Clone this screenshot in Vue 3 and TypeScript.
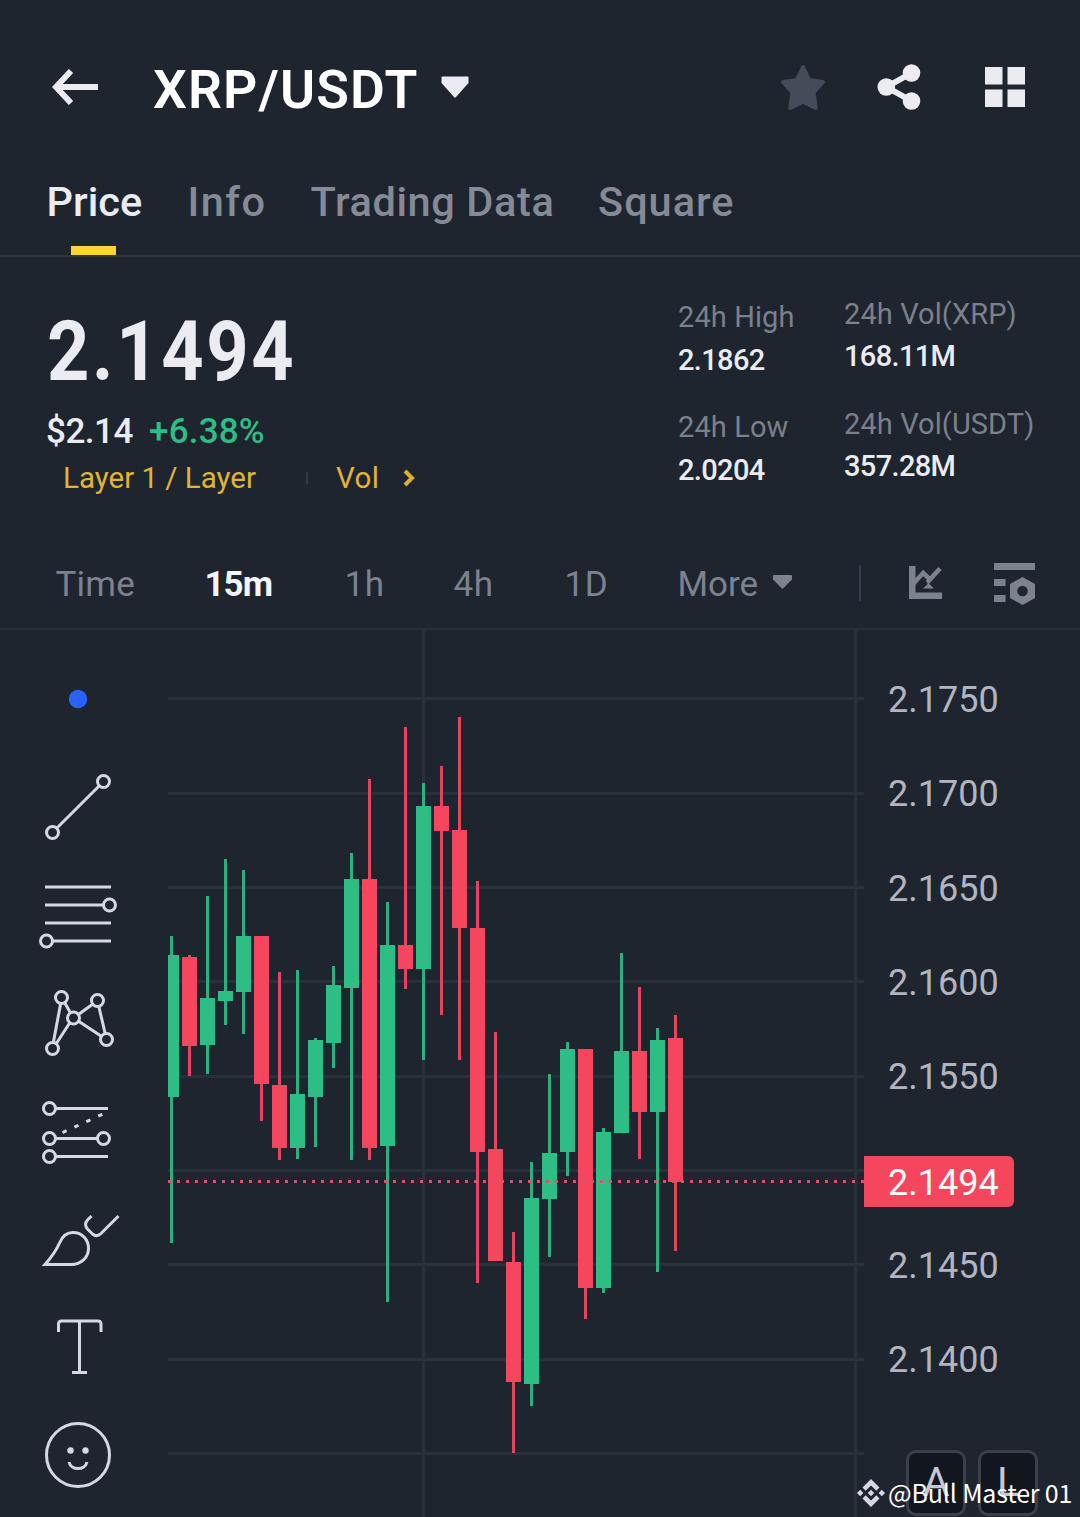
<script setup lang="ts">
interface Tab { label: string; width: number; spacing: number; active?: boolean }
interface Stat { label: string; value: string }
interface Interval { label: string; width: number; spacing: number; active?: boolean }
type Candle = [high: number, top: number, bottom: number, low: number, up: 0 | 1]

const tabs: Tab[] = [
  { label: 'Price', width: 141, spacing: 0, active: true },
  { label: 'Info', width: 123, spacing: 1.5 },
  { label: 'Trading Data', width: 287.5, spacing: 0.6 },
  { label: 'Square', width: 150, spacing: 1 },
]

const rangeStats: Stat[] = [
  { label: '24h High', value: '2.1862' },
  { label: '24h Low', value: '2.0204' },
]
const volumeStats: Stat[] = [
  { label: '24h Vol(XRP)', value: '168.11M' },
  { label: '24h Vol(USDT)', value: '357.28M' },
]

const intervals: Interval[] = [
  { label: 'Time', width: 149, spacing: 0.2 },
  { label: '15m', width: 140, spacing: -1, active: true },
  { label: '1h', width: 109, spacing: 0.6 },
  { label: '4h', width: 111, spacing: 0.6 },
  { label: '1D', width: 113, spacing: 0.6 },
  { label: 'More', width: 96, spacing: 0 },
]

const axisLabels: string[] = ['2.1750', '2.1700', '2.1650', '2.1600', '2.1550', '', '2.1450', '2.1400']

// Plot coordinates: the SVG view box starts at x 168, y 630.
const gridLines: number[] = [698.5, 793.5, 887.5, 981.5, 1076.5, 1170.5, 1264.5, 1359.5, 1453.5]
const candles: Candle[] = [
  [936, 955, 1097, 1243, 1], [955, 957, 1046, 1076, 0], [896, 998, 1045, 1074, 1],
  [859, 991, 1001, 1025, 1], [870, 936, 992, 1034, 1], [936, 936, 1084, 1121, 0],
  [972, 1085, 1148, 1160, 0], [970, 1094, 1148, 1159, 1], [1038, 1040, 1097, 1147, 1],
  [966, 985, 1043, 1068, 1], [853, 879, 988, 1160, 1], [779, 879, 1148, 1160, 0],
  [902, 945, 1146, 1302, 1], [727, 945, 969, 989, 0], [783, 806, 969, 1060, 1],
  [766, 806, 831, 1015, 0], [717, 830, 928, 1060, 0], [881, 928, 1152, 1283, 0],
  [1032, 1149, 1261, 1261, 0], [1232, 1262, 1382, 1453, 0], [1162, 1198, 1384, 1406, 1],
  [1074, 1153, 1199, 1257, 1], [1042, 1049, 1152, 1176, 1], [1049, 1049, 1288, 1319, 0],
  [1128, 1132, 1288, 1293, 1], [953, 1051, 1133, 1133, 1], [987, 1051, 1112, 1159, 0],
  [1028, 1040, 1112, 1272, 1], [1015, 1038, 1182, 1251, 0],
]
const centerX = (i: number): number => 171.5 + i * 18
</script>

<template>
  <main class="screen">
    <header class="topbar">
      <svg class="back" width="46" height="36" viewBox="0 0 46 36">
        <path d="M46 18H6M19 2L4 18L19 34" fill="none" stroke="#eaecf2" stroke-width="6" />
      </svg>
      <h1 class="pair">XRP/USDT</h1>
      <svg class="caret" width="28" height="22" viewBox="0 0 28 22">
        <path d="M0.5 1.5Q0.5 0.5 1.5 0.5H26.5Q27.5 0.5 27.5 1.5V7L15 21Q14 22 13 21L0.5 7Z" fill="#eaecf2" />
      </svg>
      <svg class="star" width="46" height="48" viewBox="0 0 46 48">
        <path d="M23 3L29.2 16L43 18L33.5 28.5L35.8 44L23 37.8L10.2 44L12.5 28.5L3 18L16.8 16Z" fill="#464b59" stroke="#464b59" stroke-width="4" stroke-linejoin="round" />
      </svg>
      <svg class="share" width="44" height="46" viewBox="0 0 44 46">
        <path d="M34.5 9L9.5 23L34.5 37" fill="none" stroke="#eaecf2" stroke-width="6" />
        <circle cx="34.5" cy="9" r="8.8" fill="#eaecf2" />
        <circle cx="9.3" cy="23" r="8.8" fill="#eaecf2" />
        <circle cx="34.5" cy="37" r="8.8" fill="#eaecf2" />
      </svg>
      <svg width="40" height="40" viewBox="0 0 40 40">
        <path d="M0 0H17.5V17.5H0ZM22.5 0H40V17.5H22.5ZM0 22.5H17.5V40H0ZM22.5 22.5H40V40H22.5Z" fill="#eaecf2" />
      </svg>
    </header>

    <nav class="tabs">
      <span
        v-for="tab in tabs"
        :key="tab.label"
        class="tab"
        :class="{ active: tab.active }"
        :style="{ width: tab.width + 'px', letterSpacing: tab.spacing + 'px' }"
      >{{ tab.label }}</span>
    </nav>

    <section class="summary">
      <div class="quote">
        <div class="price">2.1494</div>
        <div class="fiat"><span class="usd">$2.14</span><span class="change">+6.38%</span></div>
        <div class="tags">
          <span class="tag-name">Layer 1 / Layer</span>
          <i class="tag-sep"></i>
          <span class="tag-vol">Vol</span>
          <svg width="12" height="18" viewBox="0 0 12 18">
            <path d="M2 2L9 9L2 16" fill="none" stroke="#dcb02f" stroke-width="4" />
          </svg>
        </div>
      </div>
      <dl class="stats">
        <div v-for="s in rangeStats" :key="s.label" class="stat"><dt>{{ s.label }}</dt><dd>{{ s.value }}</dd></div>
      </dl>
      <dl class="stats volume">
        <div v-for="s in volumeStats" :key="s.label" class="stat"><dt>{{ s.label }}</dt><dd>{{ s.value }}</dd></div>
      </dl>
    </section>

    <nav class="intervals">
      <span
        v-for="item in intervals"
        :key="item.label"
        class="interval"
        :class="{ active: item.active }"
        :style="{ width: item.width + 'px', letterSpacing: item.spacing + 'px' }"
      >{{ item.label }}</span>
      <svg class="more-caret" width="19" height="14" viewBox="0 0 19 14">
        <path d="M0 1Q0 0 1 0H18Q19 0 19 1V4.5L10.3 13.3Q9.5 14 8.7 13.3L0 4.5Z" fill="#7d828f" />
      </svg>
      <i class="divider"></i>
      <svg class="indicator" width="33" height="34" viewBox="0 0 33 34">
        <path d="M0 1H6.5V27.5H33V34H0Z" fill="#7d828f" />
        <path d="M4 19L14.2 8L21 14.5L31 3.5" fill="none" stroke="#7d828f" stroke-width="4.5" />
        <path d="M19.5 18.2L14 23.5H25Z" fill="#7d828f" />
        <path d="M19.5 20L16.8 15.5L20.5 12L22.4 15.5Z" fill="#7d828f" />
      </svg>
      <svg width="42" height="44" viewBox="0 0 42 44">
        <path d="M0 1H41V8H0ZM0 17H11.5V24H0ZM0 33H11.5V40H0Z" fill="#7d828f" />
        <path fill-rule="evenodd" d="M28.5 15L41 22V36L28.5 43L16 36V22ZM28.5 23.7A5.3 5.3 0 1 0 28.5 34.3A5.3 5.3 0 1 0 28.5 23.7Z" fill="#7d828f" />
      </svg>
    </nav>

    <section class="chart">
      <aside class="tools">
        <svg viewBox="-42 -42 84 84"><circle r="9.2" class="dot" /></svg>
        <svg viewBox="-42 -42 84 84">
          <path d="M-21.3 21.3L21.3 -21.3" /><circle cx="25.5" cy="-25.5" r="6" /><circle cx="-25.5" cy="25.5" r="6" />
        </svg>
        <svg viewBox="-42 -42 84 84">
          <path d="M-33 -27H33M-33 -9H25.5M-33 9H33M-25.5 27H33" />
          <circle cx="31.5" cy="-9" r="6" /><circle cx="-31.5" cy="27" r="6" />
        </svg>
        <svg viewBox="-42 -42 84 84">
          <path d="M-24.7 19.6L-17.3 -19.6M-13.4 -20.4L-7.6 -10.2M0.4 -8.5L14.6 -18.8M20.8 -16.7L27.2 10.7M0.6 -1.7L23.4 13.3M-8.2 -0.2L-21.8 20.7" />
          <circle cx="-16.5" cy="-25.5" r="6" /><circle cx="19.5" cy="-22.5" r="6" /><circle cx="-4.5" cy="-5" r="6" />
          <circle cx="28.5" cy="16.5" r="6" /><circle cx="-25.5" cy="25.5" r="6" />
        </svg>
        <svg viewBox="-42 -42 84 84">
          <path d="M-22.5 -22.5H30M-22.5 7.5H19.5M-22.5 25.5H30" />
          <path d="M-15.5 1.6L25 -17" stroke-dasharray="4.5 8.6" />
          <circle cx="-28.5" cy="-22.5" r="6" /><circle cx="-28.5" cy="7.5" r="6" /><circle cx="-28.5" cy="25.5" r="6" /><circle cx="25.5" cy="7.5" r="6" />
        </svg>
        <svg viewBox="-42 -42 84 84">
          <path d="M-33 25.5C-26 17.5 -21.5 11 -18.5 4C-15.5 -3.5 -10.5 -6.500 -5 -6.500C4.500 -6.500 10.500 1 10.500 9.500C10.500 18.500 3 25.500 -7 25.500Z" />
          <path d="M13.500 -23L9.500 -19Q5.500 -14.500 9.500 -10L14.500 -5Q18.700 -1.500 23 -5.500L40.500 -23" />
        </svg>
        <svg viewBox="-42 -42 84 84">
          <path d="M-19.500 -15V-23Q-19.500 -26 -16.500 -26H20Q23 -26 23 -23V-15M1.500 -26V25.500M-6 25.500H9" />
        </svg>
        <svg viewBox="-42 -42 84 84">
          <circle r="31.500" /><path d="M-9 7C-7 15.800 7 15.800 9 7" />
          <circle cx="-7.500" cy="-4.500" r="3.200" class="eye" /><circle cx="7.500" cy="-4.500" r="3.200" class="eye" />
        </svg>
      </aside>

      <svg class="plot" width="696" height="887" viewBox="168 630 696 887">
        <path v-for="y in gridLines" :key="y" class="grid" :d="`M168 ${y}H864`" />
        <path class="grid" d="M423.500 630V1517M855.500 630V1517" />
        <g v-for="(c, i) in candles" :key="i" :class="c[4] ? 'up' : 'down'">
          <rect class="wick" :x="centerX(i) - 1.5" :y="c[0]" width="3" :height="c[3] - c[0]" />
          <rect :x="centerX(i) - 7.5" :y="c[1]" width="15" :height="c[2] - c[1]" />
        </g>
        <path class="last" d="M168 1181.500H864" />
      </svg>

      <div class="axis">
        <span v-for="(label, i) in axisLabels" :key="i" class="level">{{ label }}</span>
        <span class="last-price">2.1494</span>
        <div class="scale-buttons">
          <span class="scale-button">A</span>
          <span class="scale-button">L</span>
        </div>
        <div class="author">
          <svg width="28" height="28" viewBox="-14 -14 28 28">
            <path d="M0 -14L8.500 -5.500L5.300 -2.300L0 -7.600L-5.300 -2.300L-8.500 -5.500ZM0 14L8.500 5.500L5.300 2.300L0 7.600L-5.300 2.300L-8.500 5.500ZM-10.800 -3.200L-7.600 0L-10.800 3.200L-14 0ZM10.800 -3.200L14 0L10.800 3.200L7.600 0ZM0 -3.200L3.200 0L0 3.200L-3.200 0Z" />
          </svg>
          <span>@Bull Master 01</span>
        </div>
      </div>
    </section>
  </main>
</template>

<style>
body { background: #1f252f; }
</style>

<style scoped>
.screen {
  width: 1080px;
  height: 1517px;
  overflow: hidden;
  background: #1f252f;
  color: #eaecf2;
  font-family: Roboto, "Liberation Sans", sans-serif;
  white-space: nowrap;
}
svg { display: block; flex: none; }

.topbar {
  display: flex;
  align-items: center;
  height: 174px;
  padding-left: 52px;
}
.pair {
  width: 288px;
  margin: 5px 0 0 55px;
  color: #fff;
  font-size: 53.5px;
  font-weight: 600;
  line-height: 64px;
  letter-spacing: 1.1px;
}
.star { margin-left: 310.5px; margin-top: 2px; }
.share { margin-left: 51.5px; }
.share + svg { margin-left: 64px; }

.tabs {
  display: flex;
  height: 81px;
  padding-left: 46.5px;
  border-bottom: 2px solid #30363f;
}
.tab {
  position: relative;
  flex: none;
  color: #858a97;
  font-size: 41.5px;
  font-weight: 500;
  line-height: 56px;
}
.tab.active { color: #eaecf2; }
.tab.active::after {
  content: "";
  position: absolute;
  left: 24.5px;
  bottom: 0;
  width: 45px;
  height: 9px;
  background: #fcd535;
}

.summary {
  display: flex;
  height: 284px;
  padding-left: 46px;
}
.quote { width: 632px; padding-top: 55px; }
.price {
  margin-left: 1px;
  font-size: 84px;
  font-weight: 700;
  line-height: 80px;
  letter-spacing: 3px;
  transform: scaleX(0.88);
  transform-origin: left;
}
.fiat {
  display: flex;
  margin-top: 18px;
  font-size: 35px;
  font-weight: 500;
  line-height: 44px;
}
.usd { width: 103px; letter-spacing: -0.5px; }
.change { color: #2ebd85; letter-spacing: 0.2px; }
.tags {
  display: flex;
  align-items: center;
  margin-top: 3px;
  padding-left: 17px;
  color: #e0b535;
  font-size: 29.5px;
  line-height: 42px;
}
.tag-name { width: 243px; }
.tag-sep { width: 2px; height: 12px; background: #343a44; }
.tag-vol { width: 67px; margin-left: 28px; letter-spacing: 0.4px; }

.stats { width: 166px; margin: 0; padding-top: 40px; font-size: 29px; }
.volume { padding-top: 37px; }
.stat { height: 110px; }
.volume .stat { height: 109.5px; }
dt { color: #7b808d; line-height: 40px; height: 43px; letter-spacing: 0.1px; }
dd { margin: 0; line-height: 40px; font-weight: 500; letter-spacing: -0.65px; }
.volume dt { height: 42px; }

.intervals {
  display: flex;
  align-items: center;
  height: 87px;
  padding-left: 55.5px;
  border-bottom: 2px solid #292f39;
}
.interval { flex: none; padding-top: 1px; color: #7d828f; font-size: 35px; line-height: 44px; }
.interval.active { color: #f4f5fa; font-weight: 700; }
.more-caret { margin: -5px 0 0 -1px; }
.divider { width: 2px; height: 36px; margin: -4px 0 0 67px; background: #363c47; }
.indicator { margin: -5px 52px 0 48px; }
.indicator + svg { margin-top: -2px; }

.chart { display: flex; height: 887px; }
.tools {
  display: flex;
  flex-direction: column;
  gap: 24px;
  width: 132px;
  padding: 27px 0 0 36px;
}
.tools svg {
  width: 84px;
  height: 84px;
  fill: none;
  stroke: #d5d8e4;
  stroke-width: 3;
}
.tools svg:nth-child(3) { margin: -1.5px 0 1.5px; }
.tools .dot { fill: #2962ff; stroke: none; }
.tools .eye { fill: #d5d8e4; stroke: none; }

.grid { stroke: #2a303a; stroke-width: 3; }
.up { fill: #2ebd85; }
.down { fill: #f6465d; }
.wick { opacity: 0.92; }
.last { stroke: #d95368; stroke-width: 3; stroke-dasharray: 3 6; }

.axis {
  position: relative;
  display: flex;
  flex-direction: column;
  width: 216px;
  padding-top: 23px;
  color: #b2b5c0;
  font-size: 36px;
}
.level { flex: none; height: 94.33px; padding-left: 24px; line-height: 94.33px; }
.last-price {
  position: absolute;
  top: 526px;
  left: 0;
  width: 126px;
  height: 51px;
  padding-left: 24px;
  border-radius: 0 6px 6px 0;
  background: #f6465d;
  color: #fff;
  line-height: 54px;
}
.scale-buttons { position: absolute; top: 820px; left: 42px; display: flex; gap: 12px; }
.scale-button {
  box-sizing: border-box;
  width: 60px;
  height: 66px;
  border: 3px solid #3b3f4a;
  border-radius: 10px;
  background: #11161f;
  color: #c5c8d4;
  font-size: 41px;
  line-height: 59px;
  text-align: center;
}
.author {
  position: absolute;
  top: 844px;
  left: -7px;
  display: flex;
  align-items: center;
  gap: 3px;
  color: #fff;
  font: 400 25px/36px "Noto Sans CJK SC", sans-serif;
  letter-spacing: -0.15px;
}
.author svg { margin-top: 1px; fill: #d5d8e4; }
</style>
